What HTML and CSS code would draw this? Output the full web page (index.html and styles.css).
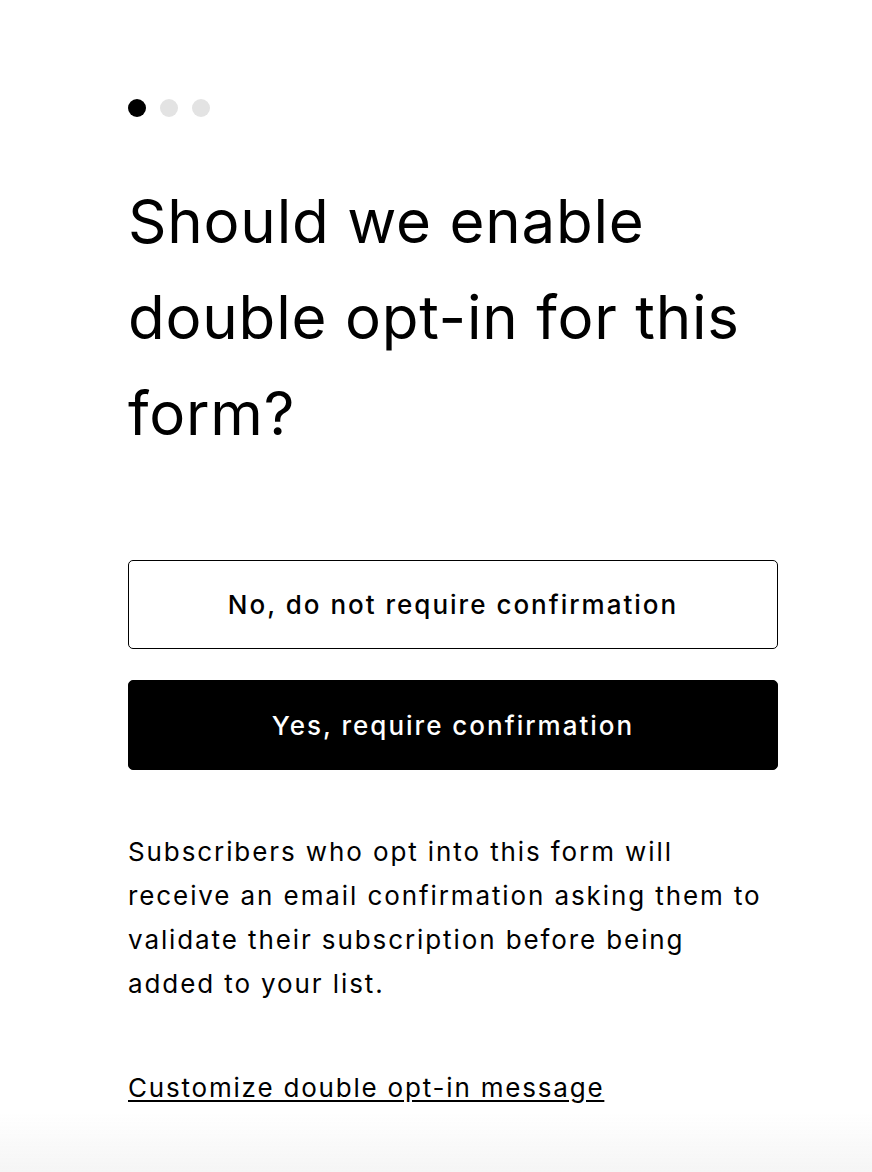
FILE: index.html
```html
<!DOCTYPE html>
<html lang="en">
<head>
    <meta charset="UTF-8">
    <meta name="viewport" content="width=device-width, initial-scale=1.0">
    <title>Double opt-in</title>
    <link rel="stylesheet" href="styles.css">
</head>
<body>
    <div class="step">
        <div class="dots">
            <span class="dot active"></span>
            <span class="dot"></span>
            <span class="dot"></span>
        </div>

        <h1 class="question">Should we enable double opt-in for this form?</h1>

        <div class="choices">
            <button class="choice">No, do not require confirmation</button>
            <button class="choice primary">Yes, require confirmation</button>
        </div>

        <p class="note">Subscribers who opt into this form will receive an email confirmation asking them to validate their subscription before being added to your list.</p>

        <a href="#" class="customize">Customize double opt-in message</a>
    </div>
    <div class="fade"></div>
</body>
</html>
```

FILE: styles.css
```css
body {
    margin: 0;
    background: #fff;
    color: #000;
    font-family: Inter, "Open Sans", sans-serif;
}

.step {
    width: 650px;
    padding: 99px 0 0 128px;
}

.dots {
    display: flex;
    gap: 14px;
}

.dot {
    width: 18px;
    height: 18px;
    border-radius: 50%;
    background: #e3e3e3;
}

.dot.active {
    background: #000;
}

.question {
    margin: 56px 0 0;
    font-size: 60px;
    font-weight: 400;
    line-height: 96px;
    letter-spacing: 0.8px;
}

.choices {
    display: flex;
    flex-direction: column;
    gap: 31px;
    margin-top: 99px;
}

.choice {
    height: 89px;
    border: 1.5px solid #000;
    border-radius: 5px;
    background: #fff;
    color: #000;
    font-family: inherit;
    font-size: 26px;
    font-weight: 500;
    letter-spacing: 2px;
    cursor: pointer;
}

.choice.primary {
    height: 90px;
    background: #000;
    color: #fff;
}

.note {
    max-width: 640px;
    margin: 60px 0 0;
    font-size: 26px;
    line-height: 44px;
    letter-spacing: 1.9px;
}

.customize {
    display: inline-block;
    margin-top: 60px;
    font-size: 26px;
    line-height: 44px;
    letter-spacing: 1.8px;
    color: #000;
    text-decoration: underline;
    text-underline-offset: 3px;
}

.fade {
    position: fixed;
    left: 0;
    right: 0;
    bottom: 0;
    height: 60px;
    background: linear-gradient(to bottom, rgba(245, 245, 245, 0), #f5f5f5);
    pointer-events: none;
}
```
